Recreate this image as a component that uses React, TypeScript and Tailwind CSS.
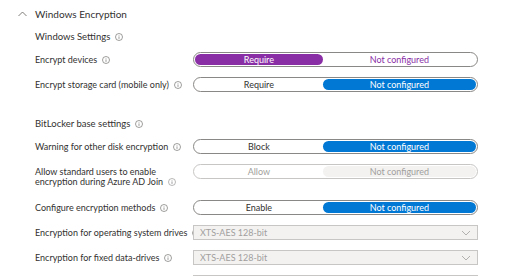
import React from 'react'

const font = { fontFamily: 'Lato, "Open Sans", sans-serif' }

function Info({ muted = false }: { muted?: boolean }) {
  return (
    <svg width="8" height="8" viewBox="0 0 16 16" className="inline-block shrink-0 ml-[5px]">
      <circle cx="8" cy="8" r="7" fill="none" stroke={muted ? '#8a8886' : '#605e5c'} strokeWidth="1.2" />
      <rect x="7.4" y="6.8" width="1.2" height="5" fill="#605e5c" />
      <circle cx="8" cy="4.7" r="0.8" fill="#605e5c" />
    </svg>
  )
}

type ToggleProps = {
  left: string
  right: string
  active: 'left' | 'right'
  tone?: 'purple' | 'blue' | 'disabled'
}

function Toggle({ left, right, active, tone = 'blue' }: ToggleProps) {
  const disabled = tone === 'disabled'
  const on =
    tone === 'purple'
      ? 'bg-[#8a2ea6] text-white'
      : tone === 'blue'
        ? 'bg-[#0078d4] text-white'
        : 'bg-[#f3f2f1] text-[#a19f9d]'
  const off = disabled ? 'text-[#a19f9d]' : tone === 'purple' ? 'text-[#8a2ea6]' : 'text-[#323130]'
  return (
    <div
      className={`flex shrink-0 w-[285px] h-[15px] rounded-full border ${
        disabled ? 'border-[#c8c6c4]' : 'border-[#8a8886]'
      } p-px text-[9px] leading-none`}
    >
      <div
        className={`flex-1 flex items-center justify-center rounded-full ${
          active === 'left' ? on : off
        }`}
      >
        {left}
      </div>
      <div
        className={`flex-[1.2] flex items-center justify-center rounded-full ${
          active === 'right' ? on : off
        }`}
      >
        {right}
      </div>
    </div>
  )
}

function Dropdown({ value }: { value: string }) {
  return (
    <div className="flex shrink-0 items-center justify-between w-[285px] h-[15px] border border-[#c8c6c4] bg-[#f3f2f1] px-[6px] text-[9px] text-[#a19f9d]">
      <span>{value}</span>
      <svg width="10" height="6" viewBox="0 0 10 6">
        <path d="M1 1l4 4 4-4" fill="none" stroke="#a19f9d" strokeWidth="0.8" />
      </svg>
    </div>
  )
}

export default function App() {
  return (
    <div className="w-[525px] h-[276px] overflow-hidden bg-white text-[#323130]" style={font}>
      <div className="pt-[7px]">
        {/* section header */}
        <div className="flex items-center h-[14px]">
          <svg width="9" height="6" viewBox="0 0 9 6" className="ml-[18px]">
            <path d="M0.5 5L4.5 1l4 4" fill="none" stroke="#605e5c" strokeWidth="0.8" />
          </svg>
          <span className="ml-[8px] text-[10px]">Windows Encryption</span>
        </div>

        <div className="pl-[35px] text-[9px] whitespace-nowrap">
          <div className="flex items-center h-[14px] mt-[9px] text-[9.5px]">
            Windows Settings
            <Info />
          </div>

          <div className="flex items-center mt-[8px]">
            <div className="w-[158px] flex items-center">
              Encrypt devices
              <Info />
            </div>
            <Toggle left="Require" right="Not configured" active="left" tone="purple" />
          </div>

          <div className="flex items-center mt-[10px]">
            <div className="w-[158px] flex items-center">
              Encrypt storage card (mobile only)
              <Info />
            </div>
            <Toggle left="Require" right="Not configured" active="right" />
          </div>

          <div className="flex items-center h-[14px] mt-[25px] text-[9.5px]">
            BitLocker base settings
            <Info />
          </div>

          <div className="flex items-center mt-[8px]">
            <div className="w-[158px] flex items-center">
              Warning for other disk encryption
              <Info />
            </div>
            <Toggle left="Block" right="Not configured" active="right" />
          </div>

          <div className="flex items-start h-[26px] mt-[10px]">
            <div className="w-[158px] leading-[10px] pt-[3px]">
              Allow standard users to enable
              <br />
              <span className="inline-flex items-center">
                encryption during Azure AD Join
                <Info muted />
              </span>
            </div>
            <Toggle left="Allow" right="Not configured" active="right" tone="disabled" />
          </div>

          <div className="flex items-center mt-[10px]">
            <div className="w-[158px] flex items-center">
              Configure encryption methods
              <Info />
            </div>
            <Toggle left="Enable" right="Not configured" active="right" />
          </div>

          <div className="flex items-center mt-[10px]">
            <div className="w-[158px] flex items-center">
              Encryption for operating system drives
              <Info />
            </div>
            <Dropdown value="XTS-AES 128-bit" />
          </div>

          <div className="flex items-center mt-[10px]">
            <div className="w-[158px] flex items-center">
              Encryption for fixed data-drives
              <Info />
            </div>
            <Dropdown value="XTS-AES 128-bit" />
          </div>

          <div className="flex items-center mt-[10px]">
            <div className="w-[158px]" />
            <Dropdown value="" />
          </div>
        </div>
      </div>
    </div>
  )
}
